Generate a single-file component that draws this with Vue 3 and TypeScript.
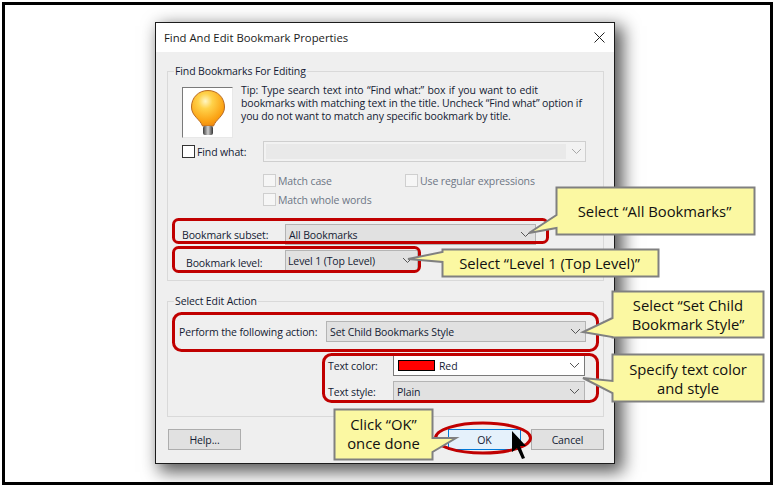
<script setup lang="ts">
interface Callout {
  text: string[]
  x: number
  y: number
  w: number
  h: number
}

const callouts: Callout[] = [
  { text: ['Select “All Bookmarks”'], x: 555, y: 188, w: 199, h: 47 },
  { text: ['Select “Level 1 (Top Level)”'], x: 441, y: 249, w: 217, h: 28 },
  { text: ['Select “Set Child', 'Bookmark Style”'], x: 612, y: 291, w: 152, h: 47 },
  { text: ['Specify text color', 'and style'], x: 612, y: 355, w: 152, h: 48 },
  { text: ['Click “OK”', 'once done'], x: 334, y: 408, w: 99, h: 51 },
]

// callout body with its pointer, each one hand-fitted to the screenshot
const calloutPaths = [
  'M556.5 187.5H754.5V234.5H556.5V228L529 233L556.5 215Z',
  'M442.5 249.5H658.5V276.5H442.5V262L408 259L442.5 252Z',
  'M612.5 291.5H763.5V337.5H612.5V337L583 332L612.5 318Z',
  'M612.5 354.5H763.5V401.5H612.5V393L583 378L612.5 381Z',
  'M334.5 409.5H432.5V438L456 438L432.5 452V459.5H334.5Z',
]
</script>

<template>
  <div class="page">
    <div class="frame">
      <div class="dialog">
        <header class="title-bar">
          <span>Find And Edit Bookmark Properties</span>
          <svg width="11" height="11" viewBox="0 0 11 11">
            <path d="M.5 .5L10.5 10.5M10.5 .5L.5 10.5" stroke="#222" fill="none" />
          </svg>
        </header>

        <div class="body">
          <fieldset class="group find-group">
            <legend>Find Bookmarks For Editing</legend>
            <div class="tip">
              <div class="bulb-box">
                <svg width="36" height="47" viewBox="0 0 36 47">
                  <defs>
                    <radialGradient id="glass" cx="0.42" cy="0.3" r="0.72">
                      <stop offset="0" stop-color="#fff6c4" />
                      <stop offset="0.3" stop-color="#ffd24a" />
                      <stop offset="0.8" stop-color="#fba112" />
                      <stop offset="1" stop-color="#ee8a10" />
                    </radialGradient>
                    <linearGradient id="screw" x1="0" x2="1" y1="0" y2="0">
                      <stop offset="0" stop-color="#3a3a3a" />
                      <stop offset="0.5" stop-color="#d0d0d0" />
                      <stop offset="1" stop-color="#333" />
                    </linearGradient>
                  </defs>
                  <path
                    d="M18 1.5C8.5 1.5 1.5 8.5 1.5 18C1.5 27 10 30 12.5 37H23.5C26 30 34.5 27 34.5 18C34.5 8.5 27.5 1.5 18 1.5Z"
                    fill="url(#glass)"
                    stroke="#b86a22"
                  />
                  <rect x="13" y="37" width="10" height="9" rx="2" fill="url(#screw)" />
                </svg>
              </div>
              <p>
                <span class="first-line">Tip: Type search text into “Find what:” box if you want to edit</span><br />
                bookmarks with matching text in the title. Uncheck “Find what” option if<br />
                you do not want to match any specific bookmark by title.
              </p>
            </div>

            <div class="find-row">
              <label class="check-label dark"><span class="box dark-box" />Find what:</label>
              <div class="find-input">
                <div class="find-field" />
                <svg width="11" height="7" viewBox="0 0 11 7"><path d="M1 1L5.5 5.5L10 1" stroke="#a8a8a8" fill="none" /></svg>
              </div>
            </div>

            <div class="options">
              <label class="check-label"><span class="box" />Match case</label>
              <label class="check-label"><span class="box" />Use regular expressions</label>
              <label class="check-label"><span class="box" />Match whole words</label>
            </div>

            <div class="field-row subset-row">
              <span>Bookmark subset:</span>
              <div class="select wide">
                All Bookmarks
                <svg width="11" height="7" viewBox="0 0 11 7"><path d="M1 1L5.5 5.5L10 1" stroke="#555" fill="none" /></svg>
              </div>
            </div>
            <div class="field-row level-row">
              <span>Bookmark level:</span>
              <div class="select level">
                Level 1 (Top Level)
                <svg width="11" height="7" viewBox="0 0 11 7"><path d="M1 1L5.5 5.5L10 1" stroke="#555" fill="none" /></svg>
              </div>
            </div>
          </fieldset>

          <fieldset class="group action-group">
            <legend>Select Edit Action</legend>
            <div class="action-row">
              <span>Perform the following action:</span>
              <div class="select action">
                Set Child Bookmarks Style
                <svg width="11" height="7" viewBox="0 0 11 7"><path d="M1 1L5.5 5.5L10 1" stroke="#555" fill="none" /></svg>
              </div>
            </div>
            <div class="text-grid">
              <span>Text color:</span>
              <div class="select color">
                <span class="swatch" />Red
                <svg width="11" height="7" viewBox="0 0 11 7"><path d="M1 1L5.5 5.5L10 1" stroke="#555" fill="none" /></svg>
              </div>
              <span>Text style:</span>
              <div class="select">
                Plain
                <svg width="11" height="7" viewBox="0 0 11 7"><path d="M1 1L5.5 5.5L10 1" stroke="#555" fill="none" /></svg>
              </div>
            </div>
          </fieldset>

          <footer class="buttons">
            <button class="btn help">Help...</button>
            <button class="btn ok">OK</button>
            <button class="btn cancel">Cancel</button>
          </footer>
        </div>
      </div>
    </div>

    <!-- annotations drawn over the dialog -->
    <svg class="marks" width="774" height="485" viewBox="0 0 774 485">
      <g fill="none" stroke="#c00000" stroke-width="3">
        <rect x="173.5" y="219.5" width="374" height="23" rx="5" />
        <rect x="173.5" y="247.5" width="246" height="24" rx="5" />
        <rect x="173.5" y="313.5" width="424" height="37" rx="8" />
        <rect x="323.5" y="354.5" width="274" height="47" rx="8" />
        <ellipse cx="483" cy="438" rx="47.5" ry="15" />
      </g>
      <path
        v-for="d in calloutPaths"
        :key="d"
        :d="d"
        fill="#fbf8a2"
        stroke="#808080"
        stroke-width="2"
      />
      <path d="M512 431L526 446L520 446L525 458L522 459L517 448L512 452Z" fill="#000" />
    </svg>
    <div
      v-for="c in callouts"
      :key="c.text[0]"
      class="callout"
      :style="{ left: c.x + 'px', top: c.y + 'px', width: c.w + 'px', height: c.h + 'px' }"
    >
      <span v-for="line in c.text" :key="line">{{ line }}</span>
    </div>
  </div>
</template>

<style scoped>
.page {
  position: relative;
  width: 774px;
  height: 485px;
  box-sizing: border-box;
  padding: 2px 1px 0 2px;
  background: #fff;
  overflow: hidden;
  font-family: "Open Sans", "Liberation Sans", sans-serif;
  font-size: 10.5px;
  letter-spacing: -0.12px;
  color: #141b33;
}

.frame {
  height: 100%;
  box-sizing: border-box;
  border: 3px solid #000;
  padding: 17px 0 0 150px;
}

.dialog {
  width: 460px;
  height: 442px;
  box-sizing: border-box;
  border: 1px solid #1c1c1c;
  background: #efefef;
  box-shadow: 6px 6px 16px 2px rgba(0, 0, 0, 0.65);
}

.title-bar {
  height: 29px;
  background: #fff;
  display: flex;
  align-items: center;
  justify-content: space-between;
  padding: 0 9px 0 8px;
  font-size: 11.3px;
  letter-spacing: 0;
  color: #1a1a1a;
}

.body {
  padding: 12px 10px 0 11px;
}

.group {
  margin: 0;
  border: 1px solid #d9d9d9;
  padding: 0;
  min-width: 0;
  box-sizing: border-box;
}

.group legend {
  padding: 0 1px;
  margin-left: 6px;
  line-height: 14px;
}

.find-group {
  height: 217px;
  padding-left: 14px;
}

.find-group legend {
  margin-left: -8px;
}

.tip {
  display: flex;
  gap: 8px;
  margin-top: 9px;
}

.bulb-box {
  width: 51px;
  height: 51px;
  flex: none;
  box-sizing: border-box;
  border: 1px solid #7a7a7a;
  border-right-color: #e8e8e8;
  border-bottom-color: #e8e8e8;
  background: #fff;
  display: flex;
  align-items: center;
  justify-content: center;
}

.tip p {
  margin: -3px 0 0;
  line-height: 13px;
  white-space: nowrap;
}

.first-line {
  word-spacing: 0.8px;
}

.find-row {
  display: flex;
  align-items: center;
  margin-top: 3px;
  height: 21px;
}

.check-label {
  display: flex;
  align-items: center;
  gap: 2px;
  color: #6d7685;
}

.check-label.dark {
  width: 81px;
  color: #141b33;
}

.box {
  width: 11px;
  height: 11px;
  border: 1px solid #cfcfcf;
  background: #f6f6f6;
}

.dark-box {
  border-color: #333;
  background: #fff;
}

.find-input {
  width: 323px;
  height: 21px;
  box-sizing: border-box;
  border: 1px solid #cfcfcf;
  background: #f2f2f2;
  display: flex;
  align-items: center;
  justify-content: space-between;
  padding: 2px 3px 2px 2px;
}

.find-field {
  width: 300px;
  height: 100%;
  background: #e9e9e9;
}

.options {
  display: grid;
  grid-template-columns: 142px auto;
  grid-auto-rows: 19px;
  margin: 9px 0 0 81px;
}

.options label:last-child {
  grid-column: 1 / -1;
}

.field-row {
  display: flex;
  align-items: center;
}

.subset-row {
  margin-top: 15px;
}

.subset-row > span {
  width: 103px;
}

.level-row {
  margin: 5px 0 0 4px;
}

.level-row > span {
  width: 99px;
  padding-top: 4px;
}

.select {
  position: relative;
  box-sizing: border-box;
  display: flex;
  align-items: center;
  padding-left: 3px;
  height: 21px;
  border: 1px solid #b4b4b4;
  background: #e1e1e1;
}

.select svg {
  position: absolute;
  right: 4px;
  top: 6px;
}

.wide {
  width: 251px;
}

.level {
  width: 133px;
  padding-left: 2px;
}

.action-group {
  margin-top: 13px;
  height: 123px;
}

.action-row {
  display: flex;
  align-items: center;
  padding: 13px 0 0 11px;
}

.action-row > span {
  width: 147px;
  white-space: nowrap;
}

.action {
  width: 260px;
}

.text-grid {
  display: grid;
  grid-template-columns: 65px 192px;
  row-gap: 5px;
  align-items: center;
  margin: 13px 0 0 160px;
}

.color {
  background: #fff;
  border-color: #7a7a7a;
}

.swatch {
  width: 37px;
  height: 11px;
  box-sizing: border-box;
  border: 1px solid #000;
  background: #f00;
  margin: 0 4px 0 1px;
}

.buttons {
  display: flex;
  margin: 12px 0 0 1px;
}

.btn {
  width: 73px;
  height: 21px;
  padding: 0;
  border: 1px solid #adadad;
  background: #e1e1e1;
  font: inherit;
  letter-spacing: inherit;
  color: inherit;
}

.help {
  margin-right: 207px;
}

.ok {
  margin-right: 10px;
  border-color: #0078d7;
  background: #e5f1fb;
}

.marks {
  position: absolute;
  left: 0;
  top: 0;
  pointer-events: none;
}

.callout {
  position: absolute;
  display: flex;
  flex-direction: column;
  align-items: center;
  justify-content: center;
  font-size: 14.8px;
  letter-spacing: 0;
  line-height: 19px;
  color: #111;
}
</style>
